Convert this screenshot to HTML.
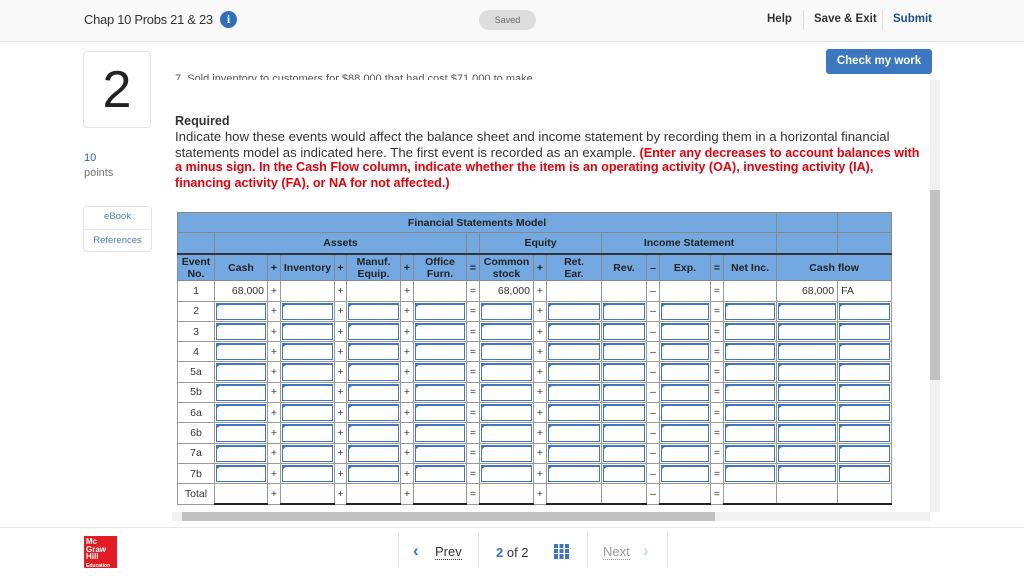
<!DOCTYPE html>
<html><head><meta charset="utf-8"><style>
*{margin:0;padding:0;box-sizing:border-box}
body{width:1024px;height:576px;overflow:hidden;background:#fff;font-family:"Liberation Sans",sans-serif;position:relative;color:#222}
.a{position:absolute}
.top{left:0;top:0;width:1024px;height:42px;background:#f9f9f9;border-bottom:1px solid #e6e6e6}
.txt{font-size:13.2px;line-height:15.5px;color:#333;white-space:nowrap}
.red{color:#e8000b;font-weight:bold;font-size:12.6px}
table{position:absolute;left:177px;top:212px;border-collapse:collapse;table-layout:fixed;width:714px;font-size:10.5px}
td{border:1px solid #999;height:20.3px;padding:0;text-align:center;color:#333;white-space:nowrap;overflow:hidden}
tr.h td{background:#73a9e0;font-weight:bold;color:#222;border-color:#888}
.i{position:relative}
.i::before{content:"";position:absolute;left:1px;top:1px;right:1px;bottom:1px;border:1px solid #4177c0;border-top-width:2px}
.i::after{content:"";position:absolute;left:2px;top:2px;border-left:4px solid #3a74c4;border-bottom:3px solid transparent}
.r{text-align:right;padding-right:3px}
tr.t td{border-bottom:2px solid #222}
tr.t td.e,tr.t td.o{border-bottom:1px solid #999}
</style></head><body>
<div class="a top"></div>
<div class="a" style="left:84px;top:12px;font-size:13px;letter-spacing:-0.3px;color:#333">Chap 10 Probs 21 &amp; 23</div>
<div class="a" style="left:220px;top:11px;width:17px;height:17px;border-radius:50%;background:#2f6fbe;color:#fff;font-weight:bold;font-size:12px;text-align:center;line-height:17px;font-family:'Liberation Serif',serif">i</div>
<div class="a" style="left:479px;top:10px;width:57px;height:20px;border-radius:10px;background:#ddd;font-size:9px;color:#666;text-align:center;line-height:20px">Saved</div>
<div class="a" style="left:767px;top:13px;font-size:11.5px;font-weight:bold;color:#333">Help</div>
<div class="a" style="left:803px;top:10px;width:1px;height:20px;background:#ddd"></div>
<div class="a" style="left:814px;top:13px;font-size:11.5px;font-weight:bold;color:#333">Save &amp; Exit</div>
<div class="a" style="left:882px;top:10px;width:1px;height:20px;background:#ddd"></div>
<div class="a" style="left:893px;top:13px;font-size:11.5px;font-weight:bold;color:#1d4f91">Submit</div>
<div class="a" style="left:826px;top:49px;width:106px;height:25px;background:#3c78c0;border-radius:3px;color:#fff;font-weight:bold;font-size:11.5px;text-align:center;line-height:25px">Check my work</div>

<div class="a" style="left:83px;top:51px;width:68px;height:77px;border:1px solid #e3e3e3;border-radius:4px;font-size:52px;text-align:center;line-height:76px;color:#222">2</div>
<div class="a" style="left:84px;top:152px;font-size:11px;color:#2f5f9e">10</div>
<div class="a" style="left:84px;top:167px;font-size:11px;color:#777">points</div>
<div class="a" style="left:83px;top:206px;width:69px;height:46px;border:1px solid #e3e3e3;border-radius:4px"></div>
<div class="a" style="left:83px;top:229px;width:69px;height:1px;background:#e8e8e8"></div>
<div class="a" style="left:83px;top:211px;width:69px;text-align:center;font-size:9.5px;color:#4a7cbf">eBook</div>
<div class="a" style="left:83px;top:235px;width:69px;text-align:center;font-size:9.5px;color:#4a7cbf">References</div>

<div class="a txt" style="left:175px;top:74px;color:#555;font-size:11px;line-height:11px;height:6px;overflow:hidden">7. Sold inventory to customers for $88,000 that had cost $71,000 to make.</div>
<div class="a txt" style="left:175px;top:114px;font-weight:bold;font-size:12.6px">Required</div>
<div class="a txt" style="left:175px;top:129px">Indicate how these events would affect the balance sheet and income statement by recording them in a horizontal financial</div>
<div class="a txt" style="left:175px;top:145px">statements model as indicated here. The first event is recorded as an example. <span class="red">(Enter any decreases to account balances with</span></div>
<div class="a txt red" style="left:175px;top:160px">a minus sign. In the Cash Flow column, indicate whether the item is an operating activity (OA), investing activity (IA),</div>
<div class="a txt red" style="left:175px;top:176px">financing activity (FA), or NA for not affected.)</div>

<table>
<colgroup><col style="width:37px"><col style="width:53px"><col style="width:13px"><col style="width:54px"><col style="width:12px"><col style="width:54px"><col style="width:13px"><col style="width:53px"><col style="width:13px"><col style="width:54px"><col style="width:13px"><col style="width:55px"><col style="width:45px"><col style="width:13px"><col style="width:51px"><col style="width:13px"><col style="width:53px"><col style="width:61px"><col style="width:54px"></colgroup>
<tr class="h" style="height:19px"><td colspan="17" style="height:19px">Financial Statements Model</td><td></td><td></td></tr>
<tr class="h"><td style="height:21px"></td><td colspan="7">Assets</td><td></td><td colspan="3">Equity</td><td colspan="5">Income Statement</td><td></td><td></td></tr>
<tr class="h" style="line-height:12px"><td style="height:27px;border-top:2px solid #333">Event<br>No.</td><td style="border-top:2px solid #333">Cash</td><td style="border-top:2px solid #333">+</td><td style="border-top:2px solid #333">Inventory</td><td style="border-top:2px solid #333">+</td><td style="border-top:2px solid #333">Manuf.<br>Equip.</td><td style="border-top:2px solid #333">+</td><td style="border-top:2px solid #333">Office<br>Furn.</td><td style="border-top:2px solid #333">=</td><td style="border-top:2px solid #333">Common<br>stock</td><td style="border-top:2px solid #333">+</td><td style="border-top:2px solid #333">Ret.<br>Ear.</td><td style="border-top:2px solid #333">Rev.</td><td style="border-top:2px solid #333">–</td><td style="border-top:2px solid #333">Exp.</td><td style="border-top:2px solid #333">=</td><td style="border-top:2px solid #333">Net Inc.</td><td colspan="2" style="border-top:2px solid #333">Cash flow</td></tr>
<tr><td class="e">1</td><td class="r">68,000</td><td class="o">+</td><td></td><td class="o">+</td><td></td><td class="o">+</td><td></td><td class="o">=</td><td class="r">68,000</td><td class="o">+</td><td></td><td></td><td class="o">–</td><td></td><td class="o">=</td><td></td><td class="r">68,000</td><td style="text-align:left;padding-left:3px">FA</td></tr>
<tr><td class="e">2</td><td class="i"></td><td class="o">+</td><td class="i"></td><td class="o">+</td><td class="i"></td><td class="o">+</td><td class="i"></td><td class="o">=</td><td class="i"></td><td class="o">+</td><td class="i"></td><td class="i"></td><td class="o">–</td><td class="i"></td><td class="o">=</td><td class="i"></td><td class="i"></td><td class="i"></td></tr>
<tr><td class="e">3</td><td class="i"></td><td class="o">+</td><td class="i"></td><td class="o">+</td><td class="i"></td><td class="o">+</td><td class="i"></td><td class="o">=</td><td class="i"></td><td class="o">+</td><td class="i"></td><td class="i"></td><td class="o">–</td><td class="i"></td><td class="o">=</td><td class="i"></td><td class="i"></td><td class="i"></td></tr>
<tr><td class="e">4</td><td class="i"></td><td class="o">+</td><td class="i"></td><td class="o">+</td><td class="i"></td><td class="o">+</td><td class="i"></td><td class="o">=</td><td class="i"></td><td class="o">+</td><td class="i"></td><td class="i"></td><td class="o">–</td><td class="i"></td><td class="o">=</td><td class="i"></td><td class="i"></td><td class="i"></td></tr>
<tr><td class="e">5a</td><td class="i"></td><td class="o">+</td><td class="i"></td><td class="o">+</td><td class="i"></td><td class="o">+</td><td class="i"></td><td class="o">=</td><td class="i"></td><td class="o">+</td><td class="i"></td><td class="i"></td><td class="o">–</td><td class="i"></td><td class="o">=</td><td class="i"></td><td class="i"></td><td class="i"></td></tr>
<tr><td class="e">5b</td><td class="i"></td><td class="o">+</td><td class="i"></td><td class="o">+</td><td class="i"></td><td class="o">+</td><td class="i"></td><td class="o">=</td><td class="i"></td><td class="o">+</td><td class="i"></td><td class="i"></td><td class="o">–</td><td class="i"></td><td class="o">=</td><td class="i"></td><td class="i"></td><td class="i"></td></tr>
<tr><td class="e">6a</td><td class="i"></td><td class="o">+</td><td class="i"></td><td class="o">+</td><td class="i"></td><td class="o">+</td><td class="i"></td><td class="o">=</td><td class="i"></td><td class="o">+</td><td class="i"></td><td class="i"></td><td class="o">–</td><td class="i"></td><td class="o">=</td><td class="i"></td><td class="i"></td><td class="i"></td></tr>
<tr><td class="e">6b</td><td class="i"></td><td class="o">+</td><td class="i"></td><td class="o">+</td><td class="i"></td><td class="o">+</td><td class="i"></td><td class="o">=</td><td class="i"></td><td class="o">+</td><td class="i"></td><td class="i"></td><td class="o">–</td><td class="i"></td><td class="o">=</td><td class="i"></td><td class="i"></td><td class="i"></td></tr>
<tr><td class="e">7a</td><td class="i"></td><td class="o">+</td><td class="i"></td><td class="o">+</td><td class="i"></td><td class="o">+</td><td class="i"></td><td class="o">=</td><td class="i"></td><td class="o">+</td><td class="i"></td><td class="i"></td><td class="o">–</td><td class="i"></td><td class="o">=</td><td class="i"></td><td class="i"></td><td class="i"></td></tr>
<tr><td class="e">7b</td><td class="i"></td><td class="o">+</td><td class="i"></td><td class="o">+</td><td class="i"></td><td class="o">+</td><td class="i"></td><td class="o">=</td><td class="i"></td><td class="o">+</td><td class="i"></td><td class="i"></td><td class="o">–</td><td class="i"></td><td class="o">=</td><td class="i"></td><td class="i"></td><td class="i"></td></tr>
<tr class="t"><td class="e">Total</td><td></td><td class="o">+</td><td></td><td class="o">+</td><td></td><td class="o">+</td><td></td><td class="o">=</td><td></td><td class="o">+</td><td></td><td></td><td class="o">–</td><td></td><td class="o">=</td><td></td><td></td><td></td></tr>
</table>

<div class="a" style="left:930px;top:80px;width:10px;height:432px;background:#f1f1f1"></div>
<div class="a" style="left:930px;top:190px;width:10px;height:190px;background:#c1c1c1"></div>
<div class="a" style="left:172px;top:512px;width:758px;height:9px;background:#f1f1f1"></div>
<div class="a" style="left:182px;top:512px;width:533px;height:9px;background:#c1c1c1"></div>
<div class="a" style="left:0;top:527px;width:1024px;height:1px;background:#e8e8e8"></div>

<div class="a" style="left:84px;top:536px;width:33px;height:32px;background:#e31b23;color:#fff;font-weight:bold;font-size:8px;line-height:7.5px;padding:2px 0 0 2px">Mc<br>Graw<br>Hill<br><span style="font-size:5px">Education</span></div>

<div class="a" style="left:398px;top:532px;width:1px;height:36px;background:#e8e8e8"></div>
<div class="a" style="left:478px;top:532px;width:1px;height:36px;background:#e8e8e8"></div>
<div class="a" style="left:587px;top:532px;width:1px;height:36px;background:#e8e8e8"></div>
<div class="a" style="left:667px;top:532px;width:1px;height:36px;background:#e8e8e8"></div>
<div class="a" style="left:413px;top:541px;font-size:17px;font-weight:bold;color:#3a74c4">‹</div>
<div class="a" style="left:435px;top:545px;font-size:13px;color:#333;border-bottom:1px dotted #333;line-height:14px">Prev</div>
<div class="a" style="left:496px;top:545px;font-size:13px;color:#333"><b style="color:#3a74c4">2</b> of 2</div>
<div class="a" style="left:554px;top:544px;width:15px;height:15px;background:linear-gradient(90deg,#3a74c4 4px,transparent 4px,transparent 5.5px,#3a74c4 5.5px,#3a74c4 9.5px,transparent 9.5px,transparent 11px,#3a74c4 11px)"></div>
<div class="a" style="left:554px;top:548px;width:15px;height:1px;background:#fff"></div>
<div class="a" style="left:554px;top:553px;width:15px;height:1px;background:#fff"></div>
<div class="a" style="left:603px;top:545px;font-size:13px;color:#999;border-bottom:1px dotted #999;line-height:14px">Next</div>
<div class="a" style="left:643px;top:541px;font-size:17px;font-weight:bold;color:#c6d8ef">›</div>
</body></html>
